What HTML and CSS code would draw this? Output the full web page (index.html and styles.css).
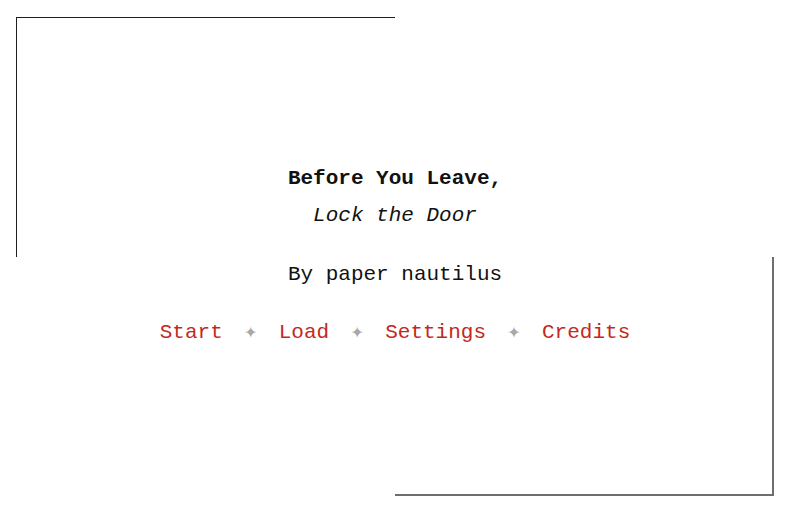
FILE: index.html
```html
<!DOCTYPE html>
<html lang="en">
<head>
<meta charset="utf-8">
<title>Before You Leave, Lock the Door</title>
<link rel="stylesheet" href="styles.css">
</head>
<body>
<div class="frame">
  <div class="corner corner-tl"></div>
  <div class="corner corner-br"></div>
  <main class="content">
    <h1 class="title">Before You Leave,</h1>
    <p class="subtitle">Lock the Door</p>
    <p class="byline">By paper nautilus</p>
    <nav class="menu">
      <a class="menu-item">Start</a>
      <span class="sep">✦</span>
      <a class="menu-item">Load</a>
      <span class="sep">✦</span>
      <a class="menu-item">Settings</a>
      <span class="sep">✦</span>
      <a class="menu-item">Credits</a>
    </nav>
  </main>
</div>
</body>
</html>
```
FILE: styles.css
```css
html, body {
  margin: 0;
  padding: 0;
  background: #ffffff;
}
body {
  font-family: "Courier New", "Nimbus Mono PS", "FreeMono", "Liberation Mono", monospace;
  font-size: 21px;
  color: #111111;
}
.frame {
  margin: 17px 20px 0 16px;
  width: 758px;
  height: 479px;
  display: grid;
  grid-template-columns: 1fr 1fr;
  grid-template-rows: 1fr 1fr;
}
.corner {
  box-sizing: border-box;
}
.corner-tl {
  grid-area: 1 / 1 / 2 / 2;
  border-top: 1px solid #1e1e1e;
  border-left: 1px solid #1e1e1e;
}
.corner-br {
  grid-area: 2 / 2 / 3 / 3;
  border-bottom: 2px solid #6e6e6e;
  border-right: 2px solid #6e6e6e;
}
.content {
  grid-area: 1 / 1 / 3 / 3;
  display: flex;
  flex-direction: column;
  align-items: center;
  justify-content: center;
  line-height: 25px;
  padding-bottom: 2px;
}
.title {
  margin: 0;
  font-size: 21px;
  font-weight: bold;
  line-height: 25px;
}
.subtitle {
  margin: 12px 0 0;
  font-style: italic;
}
.byline {
  margin: 34px 0 0;
}
.menu {
  margin-top: 33px;
  display: flex;
  align-items: center;
}
.menu-item {
  color: #c4281c;
  text-decoration: none;
}
.sep {
  color: #a8a8a8;
  font-size: 16px;
  font-family: "DejaVu Sans", sans-serif;
  width: 56px;
  text-align: center;
}
```
